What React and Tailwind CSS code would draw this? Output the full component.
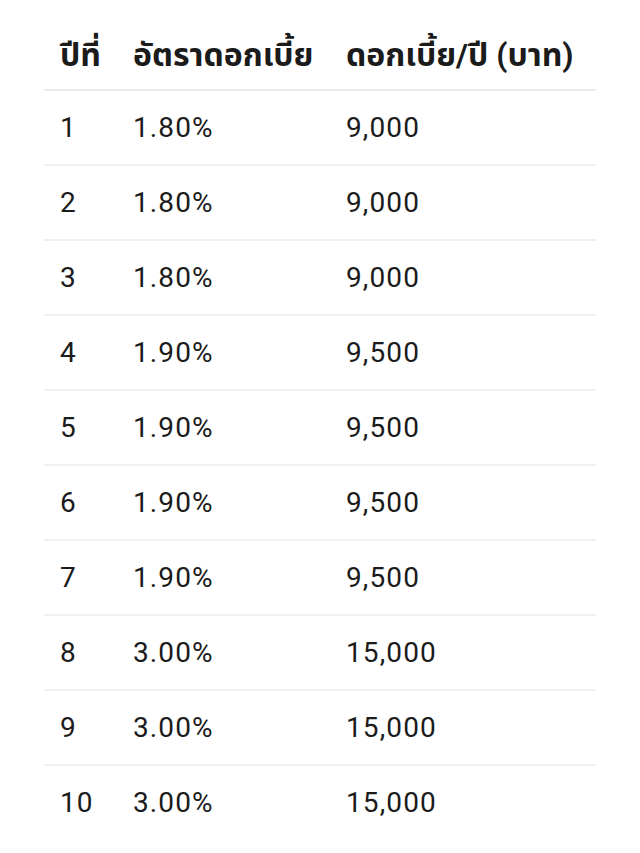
import React from "react";

const rows = [
  ["1", "1.80%", "9,000"],
  ["2", "1.80%", "9,000"],
  ["3", "1.80%", "9,000"],
  ["4", "1.90%", "9,500"],
  ["5", "1.90%", "9,500"],
  ["6", "1.90%", "9,500"],
  ["7", "1.90%", "9,500"],
  ["8", "3.00%", "15,000"],
  ["9", "3.00%", "15,000"],
  ["10", "3.00%", "15,000"],
];

export default function App() {
  return (
    <div className="w-[640px] h-[853px] bg-white px-[44px] pt-[20px]" style={{ fontFamily: "Roboto, 'Noto Sans', 'Noto Sans Thai', sans-serif" }}>
      <table className="w-full border-collapse text-[#1b1b1b]">
        <thead>
          <tr className="border-b-2 border-[#ececec]">
            <th className="h-[70px] w-[73px] pl-[16px] text-left text-[32px] font-bold align-middle leading-none">ปีที่</th>
            <th className="w-[213px] pl-[16px] text-left text-[32px] font-bold align-middle leading-none">อัตราดอกเบี้ย</th>
            <th className="pl-[16px] text-left text-[32px] font-bold align-middle leading-none">ดอกเบี้ย/ปี (บาท)</th>
          </tr>
        </thead>
        <tbody>
          {rows.map((r, i) => (
            <tr key={i} className={i < rows.length - 1 ? "border-b-2 border-[#f0f0f0]" : ""}>
              <td className="h-[75px] pl-[16px] text-[28px] tracking-[0.04em] align-middle">{r[0]}</td>
              <td className="pl-[16px] text-[28px] tracking-[0.04em] align-middle">{r[1]}</td>
              <td className="pl-[16px] text-[28px] tracking-[0.04em] align-middle">{r[2]}</td>
            </tr>
          ))}
        </tbody>
      </table>
    </div>
  );
}
